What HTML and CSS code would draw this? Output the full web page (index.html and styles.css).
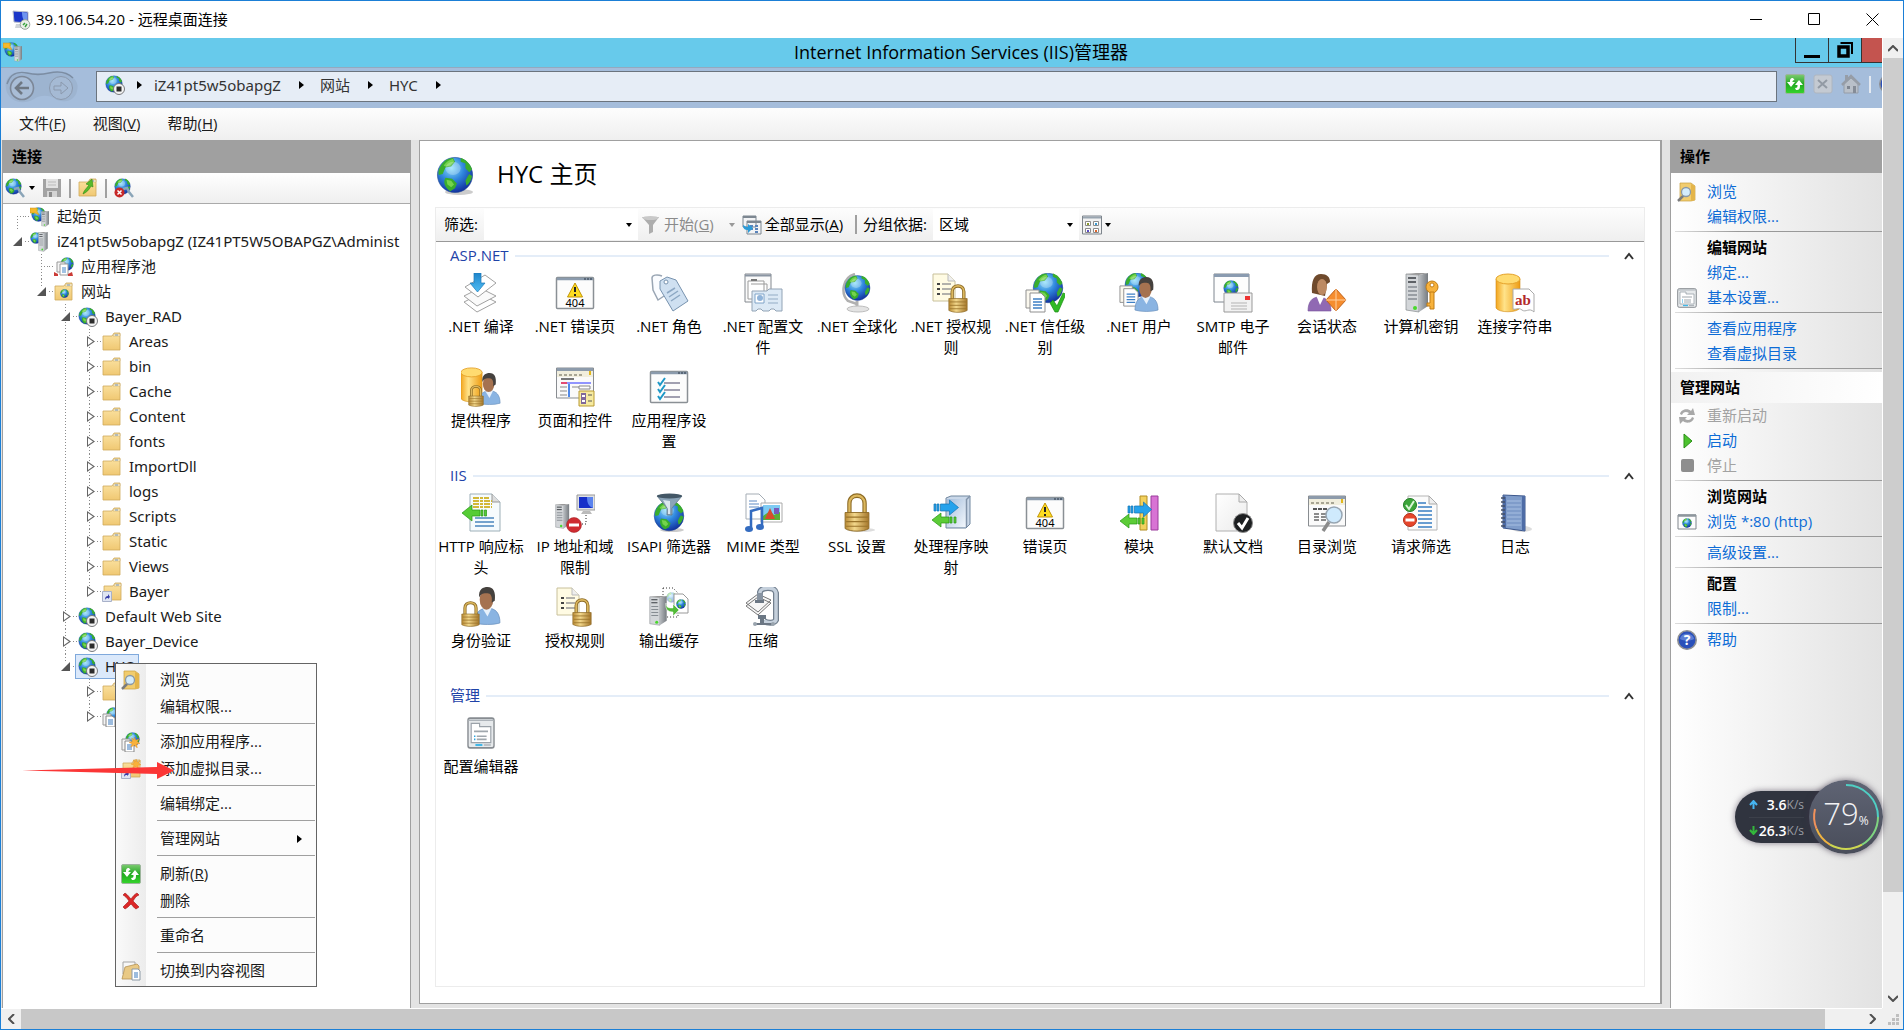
FILE: index.html
```html
<!DOCTYPE html>
<html lang="zh-CN">
  <head>
    <meta charset="UTF-8" />
    <title>39.106.54.20 - 远程桌面连接</title>
    <link rel="stylesheet" href="styles.css">
  </head>
  <body>
    <div class="window">
      <header class="titlebar">
        <svg class="icon" viewBox="0 0 20 20"><use href="#i-rdp" /></svg>
        <span class="titlebar-text">39.106.54.20 - 远程桌面连接</span>
        <button class="win-button" aria-label="最小化"><svg width="13" height="13"><path d="M0 6.500h12" stroke="#000" /></svg></button>
        <button class="win-button" aria-label="最大化"><svg width="13" height="13"><path d="M.5 .5h11v11h-11z" fill="none" stroke="#000" /></svg></button>
        <button class="win-button" aria-label="关闭"><svg width="13" height="13"><path d="M.5 .5l12 12M12.500 .5l-12 12" stroke="#000" /></svg></button>
      </header>

      <div class="viewport">
        <div class="remote">
          <!-- IIS 标题栏 -->
          <div class="iis-title">
            <svg class="icon" viewBox="0 0 20 20"><use href="#i-iis" /></svg>
            <h1 class="iis-name">Internet Information Services (IIS)管理器</h1>
            <button class="iis-button" aria-label="最小化"><svg width="16" height="16"><path d="M0 13h16v3H0z" /></svg></button>
            <button class="iis-button" aria-label="还原"><svg width="16" height="16"><path d="M2 5h9v9H2z" fill="none" stroke="#000" stroke-width="3.500" /><path d="M3.500 1h11.500v11" fill="none" stroke="#000" stroke-width="2" /></svg></button>
            <button class="iis-button close" aria-label="关闭"></button>
          </div>

          <!-- 地址栏 -->
          <div class="navbar">
            <svg class="nav-arrows" viewBox="0 0 80 36">
              <path d="M3 19C1 8 8 1 20 2c10 1 13 3 20 2 9-1 17-3 25 1 8 3 11 9 9 16-2 11-16 13-23 7-6-3-14-3-20 1C19 36 5 31 3 19z" fill="#9db4d0" />
              <path d="M4 14C7 4 15 1 24 3c8 2 14 2 22 0 9-2 18-1 24 5" fill="none" stroke="#7c8da3" stroke-width="1.500" />
              <circle cx="19" cy="18" r="11.500" fill="#a9bdd6" stroke="#7c8797" stroke-width="1.600" />
              <circle cx="58" cy="18" r="11.500" fill="#a5bad4" stroke="#8b99ad" />
              <path d="M13 18h13M19 12l-6 6 6 6" fill="none" stroke="#6f7883" stroke-width="2.600" />
              <path d="M51 16h7v-4l7 6-7 6v-4h-7z" fill="none" stroke="#8b99ad" />
            </svg>
            <nav class="address" aria-label="路径">
              <svg class="icon" viewBox="0 0 20 20"><use href="#i-site" /></svg>
              <span class="crumb-arrow"></span><a href="#">iZ41pt5w5obapgZ</a>
              <span class="crumb-arrow"></span><a href="#">网站</a>
              <span class="crumb-arrow"></span><a href="#">HYC</a>
              <span class="crumb-arrow"></span>
            </nav>
            <div class="nav-tools">
              <button aria-label="刷新"><svg class="icon" viewBox="0 0 20 20"><use href="#i-refresh" /></svg></button>
              <button aria-label="停止"><svg class="icon" viewBox="0 0 20 20"><rect x="1" y="1" width="18" height="18" rx="2" fill="#c4cad2" stroke="#aeb6c0" /><path d="M5 6l9 8M14 6l-9 8" stroke="#929aa4" stroke-width="2" /></svg></button>
              <button aria-label="主页"><svg class="icon" viewBox="0 0 20 20"><path d="M3 10v9h14v-9L10 4z" fill="#b9c0c9" stroke="#959da8" /><path d="M1 11l9-9 9 9" fill="none" stroke="#969da7" stroke-width="2.500" /><path d="M4 1h3v4L4 8z" fill="#969da7" /><path d="M12 12h3v7h-3z" fill="#858c97" /><path d="M6 12h3v3H6z" fill="#7f8691" /></svg></button>
              <span class="nav-sep"></span>
              <button aria-label="帮助"><svg class="icon" viewBox="0 0 20 20"><use href="#i-help" /></svg></button>
            </div>
          </div>

          <div class="menubar">
            <button>文件(<u>F</u>)</button>
            <button>视图(<u>V</u>)</button>
            <button>帮助(<u>H</u>)</button>
          </div>

          <div class="panes">
            <!-- 连接 -->
            <aside class="connections">
              <h2 class="pane-title">连接</h2>
              <div class="conn-tools">
                <button aria-label="连接"><svg class="icon" viewBox="0 0 20 20"><use href="#i-connect" /></svg><span class="caret"></span></button>
                <button aria-label="保存"><svg class="icon" viewBox="0 0 20 20"><path d="M1 1h18v18H1z" fill="#a3a3a3" /><path d="M4 1h12v9H4z" fill="#e3e3e3" /><path d="M6 4h8M6 7h8" stroke="#bbb" /><path d="M5 13h10v6H5z" fill="#d4d4d4" /><path d="M7 14h3v5H7z" fill="#8c8c8c" /></svg></button>
                <span class="tool-sep"></span>
                <button aria-label="上移"><svg class="icon" viewBox="0 0 20 20"><use href="#i-folder" /><path d="M5 16c1-4 4-6 6-9L8 6l6-5 1 8-2-1c-2 4-4 6-8 8z" fill="#57bb2c" stroke="#2f8a12" stroke-width=".6" /></svg></button>
                <span class="tool-sep"></span>
                <button aria-label="断开连接"><svg class="icon" viewBox="0 0 20 20"><use href="#i-connect" /><circle cx="5.500" cy="14.500" r="5" fill="#c72828" /><path d="M3.500 12.500l4 4M7.500 12.500l-4 4" stroke="#fff" stroke-width="1.500" /></svg></button>
              </div>
              <ul class="tree">
                <li><div class="node leaf"><span class="expander"></span><svg class="icon" viewBox="0 0 20 20"><use href="#i-iis" /></svg><span>起始页</span></div></li>
                <li>
                  <div class="node"><span class="expander open"></span><svg class="icon" viewBox="0 0 20 20"><use href="#i-server" /></svg><span>iZ41pt5w5obapgZ (IZ41PT5W5OBAPGZ\Administ</span></div>
                  <ul>
                    <li><div class="node leaf"><span class="expander"></span><svg class="icon" viewBox="0 0 20 20"><use href="#i-pool" /></svg><span>应用程序池</span></div></li>
                    <li>
                      <div class="node"><span class="expander open"></span><svg class="icon" viewBox="0 0 20 20"><use href="#i-folder" /><use href="#globe" x="6" y="7" width="9" height="9" /></svg><span>网站</span></div>
                      <ul>
                        <li>
                          <div class="node"><span class="expander open"></span><svg class="icon" viewBox="0 0 20 20"><use href="#i-site" /></svg><span>Bayer_RAD</span></div>
                          <ul>
                            <li><div class="node"><span class="expander"></span><svg class="icon" viewBox="0 0 20 20"><use href="#i-folder" /></svg><span>Areas</span></div></li>
                            <li><div class="node"><span class="expander"></span><svg class="icon" viewBox="0 0 20 20"><use href="#i-folder" /></svg><span>bin</span></div></li>
                            <li><div class="node"><span class="expander"></span><svg class="icon" viewBox="0 0 20 20"><use href="#i-folder" /></svg><span>Cache</span></div></li>
                            <li><div class="node"><span class="expander"></span><svg class="icon" viewBox="0 0 20 20"><use href="#i-folder" /></svg><span>Content</span></div></li>
                            <li><div class="node"><span class="expander"></span><svg class="icon" viewBox="0 0 20 20"><use href="#i-folder" /></svg><span>fonts</span></div></li>
                            <li><div class="node"><span class="expander"></span><svg class="icon" viewBox="0 0 20 20"><use href="#i-folder" /></svg><span>ImportDll</span></div></li>
                            <li><div class="node"><span class="expander"></span><svg class="icon" viewBox="0 0 20 20"><use href="#i-folder" /></svg><span>logs</span></div></li>
                            <li><div class="node"><span class="expander"></span><svg class="icon" viewBox="0 0 20 20"><use href="#i-folder" /></svg><span>Scripts</span></div></li>
                            <li><div class="node"><span class="expander"></span><svg class="icon" viewBox="0 0 20 20"><use href="#i-folder" /></svg><span>Static</span></div></li>
                            <li><div class="node"><span class="expander"></span><svg class="icon" viewBox="0 0 20 20"><use href="#i-folder" /></svg><span>Views</span></div></li>
                            <li><div class="node"><span class="expander"></span><svg class="icon" viewBox="0 0 20 20"><use href="#i-vdir" /></svg><span>Bayer</span></div></li>
                          </ul>
                        </li>
                        <li><div class="node"><span class="expander"></span><svg class="icon" viewBox="0 0 20 20"><use href="#i-site" /></svg><span>Default Web Site</span></div></li>
                        <li><div class="node"><span class="expander"></span><svg class="icon" viewBox="0 0 20 20"><use href="#i-site" /></svg><span>Bayer_Device</span></div></li>
                        <li>
                          <div class="node"><span class="expander open"></span><span class="selected"><svg class="icon" viewBox="0 0 20 20"><use href="#i-site" /></svg><span>HYC</span></span></div>
                          <ul>
                            <li><div class="node"><span class="expander"></span><svg class="icon" viewBox="0 0 20 20"><use href="#i-folder" /></svg></div></li>
                            <li><div class="node"><span class="expander"></span><svg class="icon" viewBox="0 0 20 20"><use href="#i-app" /></svg></div></li>
                          </ul>
                        </li>
                      </ul>
                    </li>
                  </ul>
                </li>
              </ul>
            </aside>

            <!-- 功能视图 -->
            <main class="features">
              <div class="page-head">
                <svg class="page-globe" viewBox="0 0 40 40"><ellipse cx="24" cy="36" rx="14" ry="3" fill="#ccc" /><use href="#globe" width="40" height="38" /></svg>
                <h2>HYC 主页</h2>
              </div>
              <div class="feature-box">
                <div class="filter-bar">
                  <label for="filter">筛选:</label>
                  <div class="combo"><input id="filter" type="text"><span class="caret"></span></div>
                  <button class="disabled"><svg class="icon" viewBox="0 0 20 20"><path d="M1 2h17l-6 8v7l-4 2v-9z" fill="#adadad" /><ellipse cx="9.500" cy="3" rx="8" ry="2" fill="#c9c9c9" /></svg>开始(<u>G</u>)</button>
                  <span class="caret gray"></span>
                  <button><svg class="icon" viewBox="0 0 20 20"><path d="M1 1h13v11H1zM5 6h14v13H5z" fill="#f3f4f6" stroke="#7d8791" /><path d="M1 2h13M5 7h14" stroke="#7d8791" stroke-width="2" /><path d="M8 11h3M13 11h3M8 14h3M13 14h3M13 17h3" stroke="#5a84bb" stroke-width="2" /><path d="M1 10c0 4 2 5 5 5v3l5-5-5-4v3c-2 0-3-1-5-2z" fill="#2b9bd8" /></svg>全部显示(<u>A</u>)</button>
                  <span class="tool-sep"></span>
                  <label for="group">分组依据:</label>
                  <div class="combo group"><select id="group"><option>区域</option></select><span class="caret"></span></div>
                  <button aria-label="视图"><svg class="icon" viewBox="0 0 20 20"><path d="M.5 1h19v18H.5z" fill="#f2f2f2" stroke="#7e858c" /><path d="M1 2.500h18" stroke="#99a5b0" stroke-width="2" /><path d="M3.500 6.500h5v4h-5zM11.500 6.500h5v4h-5zM3.500 13.500h5v4h-5zM11.500 13.500h5v4h-5z" fill="#fff" stroke="#8a8a8a" /><path d="M5 8h2v2H5z" fill="#8a9a2c" /><path d="M13 8h2v2h-2z" fill="#3c9bd2" /><path d="M5 15h2v2H5z" fill="#594bc4" /><path d="M13 15h2v2h-2z" fill="#e0662a" /></svg><span class="caret"></span></button>
                </div>

                <section>
                  <div class="group-head"><h3>ASP.NET</h3><span class="rule"></span><svg class="chevron" viewBox="0 0 10 8"><use href="#i-up" /></svg></div>
                  <div class="items">
                    <a href="#" class="item"><svg viewBox="0 0 40 40">
                      <path d="M3 29l16-8 16 8-19 10z" fill="#fff" stroke="#a1a1a1" /><path d="M3 23l16-8 16 8-19 10z" fill="#fafafa" stroke="#a1a1a1" /><path d="M4 14L24 2l11 8-18 14z" fill="#fff" stroke="#a1a1a1" />
                      <path d="M13 0h7v10h4l-7.500 9L9 10h4z" fill="url(#blueG)" stroke="#1c7ab8" stroke-width=".7" /></svg><span>.NET 编译</span></a>
                    <a href="#" class="item"><svg viewBox="0 0 40 40"><use href="#warning" /><text x="20" y="34" text-anchor="middle" class="code">404</text></svg><span>.NET 错误页</span></a>
                    <a href="#" class="item"><svg viewBox="0 0 40 40">
                      <path d="M13 3C8 1 3 2 3 5l1 12 5 10 6-4" fill="#fafcff" stroke="#9aa6b4" stroke-width="1.500" />
                      <path d="M11 8l7-4 9 3 12 21-15 10-13-22z" fill="#cfe0f1" stroke="#7792ae" /><circle cx="17" cy="9" r="2" fill="#fff" stroke="#7792ae" /><path d="M18 20l8-5M20 24l9-6M22 28l9-6" stroke="#8ca7c3" stroke-width="1.500" /></svg><span>.NET 角色</span></a>
                    <a href="#" class="item"><svg viewBox="0 0 40 40">
                      <path d="M2 1h26v28H2z" fill="#fafafa" stroke="#84898f" /><path d="M2 2.500h26" stroke="#8a95a2" stroke-width="2" /><path d="M5 8h16v18H5zM8 11h16v12" fill="#fff" stroke="#9b9b9b" /><path d="M8 7h6" stroke="#777" stroke-width="2" />
                      <path d="M9 18h15l2-2h13v22h-6l-2-2h-3l-2 2h-6l-2-2h-3l-2 2H9z" fill="#dce9f5" stroke="#92a3b5" /><path d="M12 21h9v9h-9z" fill="#fff" stroke="#7fa3c8" /><circle cx="17" cy="25" r="3" fill="#8fb3d9" /><path d="M25 22h10M25 26h10M25 30h10" stroke="#93acc5" /></svg><span>.NET 配置文<br>件</span></a>
                    <a href="#" class="item"><svg viewBox="0 0 40 40">
                      <path d="M18 1C6 4 3 20 11 28l9 3" fill="none" stroke="#b0b0b0" stroke-width="2.500" /><path d="M20 28v7" stroke="#b0b0b0" stroke-width="3" /><ellipse cx="21" cy="36" rx="11" ry="3" fill="#e3e3e3" stroke="#bdbdbd" /><use href="#globe" x="7" y="1" width="27" height="28" /></svg><span>.NET 全球化</span></a>
                    <a href="#" class="item"><svg viewBox="0 0 40 40"><use href="#frules" /></svg><span>.NET 授权规<br>则</span></a>
                    <a href="#" class="item"><svg viewBox="0 0 40 40">
                      <use href="#globe" x="7" y="-1" width="32" height="32" /><use href="#docs" x="0" y="16" width="21" height="24" /><path d="M25 30l3-3 4 6 6-13 3 1-8 18h-3z" fill="#31bb25" stroke="#1b8b12" stroke-width=".7" /></svg><span>.NET 信任级<br>别</span></a>
                    <a href="#" class="item"><svg viewBox="0 0 40 40">
                      <use href="#globe" x="5" y="-1" width="26" height="26" /><use href="#docs" x="0" y="12" width="20" height="22" /><use href="#person" x="15" y="4" width="25" height="35" /></svg><span>.NET 用户</span></a>
                    <a href="#" class="item"><svg viewBox="0 0 40 40">
                      <path d="M1 1h35v28H1z" fill="#fdfdfd" stroke="#7e868f" /><path d="M1 2.500h35" stroke="#8a9bb0" stroke-width="3" /><use href="#globe" x="10" y="7" width="16" height="16" /><path d="M11 20h28v19H11z" fill="#f2f2f2" stroke="#999" /><path d="M32 23h5v4h-5z" fill="#e33" /><path d="M18 30h16M18 33h16M18 36h16" stroke="#b3b3b3" /></svg><span>SMTP 电子<br>邮件</span></a>
                    <a href="#" class="item"><svg viewBox="0 0 40 40">
                      <path d="M1 38c0-9 4-14 11-14s12 5 12 14z" fill="#9069b3" stroke="#76539a" stroke-width=".6" /><path d="M9 22l4 10 5-10z" fill="#fff" /><path d="M5 20C4 8 7 1 14 1c6 0 9 3 9 8l-3 2-2 12z" fill="#6f4a2c" /><ellipse cx="15" cy="14" rx="5" ry="8" fill="#bd8a62" />
                      <path d="M29 16l10 11-10 11-10-11z" fill="#f68d2e" stroke="#c1621a" /><path d="M29 16v22M19 27h20" stroke="#ffd0a0" /></svg><span>会话状态</span></a>
                    <a href="#" class="item"><svg viewBox="0 0 40 40">
                      <use href="#tower" x="4" y="0" width="26" height="40" /><circle cx="31" cy="14" r="6" fill="#f7b23c" stroke="#c17d14" /><circle cx="31" cy="12" r="2" fill="#fff" stroke="#c17d14" /><path d="M29 19h4v17h-4v-3h-3v-3h3z" fill="#f7b23c" stroke="#c17d14" /></svg><span>计算机密钥</span></a>
                    <a href="#" class="item"><svg viewBox="0 0 40 40">
                      <use href="#database" x="0" y="0" width="26" height="40" /><path d="M18 16h16l5 5v18c-5-5-8 1-12-2s-6 0-9-1z" fill="#fff" stroke="#aaa" /><text x="20" y="32" class="ab">ab</text></svg><span>连接字符串</span></a>
                    <a href="#" class="item"><svg viewBox="0 0 40 40">
                      <use href="#database" x="-1" y="0" width="23" height="36" /><use href="#person" x="17" y="6" width="23" height="32" /><use href="#lock" x="7" y="18" width="16" height="22" /></svg><span>提供程序</span></a>
                    <a href="#" class="item"><svg viewBox="0 0 40 40">
                      <use href="#browser" /><path d="M6 12h13" stroke="#777" stroke-width="2" /><path d="M6 16h30" stroke="#6d72ff" stroke-width="1.500" /><path d="M6 16h6" stroke="#f34" stroke-width="1.500" /><path d="M14 17v13" stroke="#4f88e8" stroke-width="2" /><path d="M5 20h7M5 24h7M5 28h7M17 20h8" stroke="#888" /><path d="M24 19h11v3H24z" fill="#fff" stroke="#888" />
                      <path d="M24 24h15v15H24z" fill="#f6eaa0" stroke="#b99a32" /><path d="M26 26h5v11h-5z" fill="#80689a" /><path d="M27 28h3v2h-3zM27 33h3v2h-3z" fill="#fff" /><path d="M33 28h4M33 34h4" stroke="#555" /></svg><span>页面和控件</span></a>
                    <a href="#" class="item"><svg viewBox="0 0 40 40">
                      <use href="#frame" /><path d="M15 16h16M15 23h16M15 30h16" stroke="#838198" stroke-width="1.500" /><path d="M9 15l2 3 5-7M9 22l2 3 5-7M9 29l2 3 5-7" fill="none" stroke="#1d98c8" stroke-width="2" /></svg><span>应用程序设<br>置</span></a>
                  </div>
                </section>

                <section>
                  <div class="group-head"><h3>IIS</h3><span class="rule"></span><svg class="chevron" viewBox="0 0 10 8"><use href="#i-up" /></svg></div>
                  <div class="items">
                    <a href="#" class="item"><svg viewBox="0 0 40 40">
                      <path d="M9 1h22l8 8v29H9z" fill="#f6fbfd" stroke="#9dafb8" /><path d="M31 1v8h8" fill="#ddd" stroke="#999" /><path d="M12 5h16M12 8h19M12 11h19M12 14h19" stroke="#d3b838" stroke-width="2" stroke-dasharray="6 1 3 1" /><path d="M14 25h19M14 29h19M14 33h19" stroke="#4b86bd" stroke-width="1.500" />
                      <path d="M1 20l10-8v5h8v6h-8v5zM20 17h2v6h-2zM23.500 17h2v6h-2z" fill="#56cc35" stroke="#279516" stroke-width=".7" /></svg><span>HTTP 响应标<br>头</span></a>
                    <a href="#" class="item"><svg viewBox="0 0 40 40">
                      <use href="#tower" x="0" y="11" width="16" height="25" /><path d="M22 2h18v15H22z" fill="#dfe1e4" stroke="#999" /><path d="M24 4h14v11H24z" fill="#162fc9" /><path d="M32 4h6v11c-5-2-6-6-6-11z" fill="#5a83ee" /><path d="M28 18h7l2 3H26z" fill="#bbb" /><path d="M31 22v9h-7" fill="none" stroke="#222" stroke-dasharray="1 2" /><circle cx="19" cy="32" r="7.500" fill="#cf2c31" stroke="#9d1f22" stroke-width=".5" /><path d="M14 30.500h10v3H14z" fill="#fff" /></svg><span>IP 地址和域<br>限制</span></a>
                    <a href="#" class="item"><svg viewBox="0 0 40 40">
                      <ellipse cx="23" cy="37" rx="12" ry="2" fill="#ccc" /><use href="#globe" x="4" y="7" width="32" height="32" /><path d="M8 3l10 12v7h5v-7L33 3z" fill="#8ba4b8" stroke="#5d7283" stroke-width=".7" /><path d="M14 7l5 9v5l2 0V8z" fill="#dbe6ee" /><ellipse cx="20.500" cy="3" rx="12.500" ry="2.500" fill="#435766" /></svg><span>ISAPI 筛选器</span></a>
                    <a href="#" class="item"><svg viewBox="0 0 40 40">
                      <path d="M3 1h13l6 6v19H3z" fill="#fff" stroke="#a5adb5" /><path d="M6 8h8M6 11h10M6 14h10" stroke="#5e8bc4" /><path d="M18 10h21v19H18z" fill="#fff" stroke="#aaa" /><path d="M20 12h17v15H20z" fill="#7ecbf3" /><path d="M20 23l7-5 4 4 6-3v8H20z" fill="#5cae35" /><path d="M22 26l5-11 5 11z" fill="#d94c2c" /><path d="M31 15h5v6h-5z" fill="#7959b8" />
                      <path d="M8 34V18l11-3v19" fill="none" stroke="#346cc0" stroke-width="2.500" /><ellipse cx="6" cy="36" rx="4" ry="3" fill="#346cc0" /><ellipse cx="17" cy="34" rx="4" ry="3" fill="#346cc0" /></svg><span>MIME 类型</span></a>
                    <a href="#" class="item"><svg viewBox="0 0 40 40"><ellipse cx="24" cy="37" rx="14" ry="2" fill="#ddd" /><use href="#lock" x="7" y="0" width="26" height="39" /></svg><span>SSL 设置</span></a>
                    <a href="#" class="item"><svg viewBox="0 0 40 40">
                      <path d="M15 5l5-2h19v28l-4 4H15z" fill="#cad8e9" stroke="#71879f" /><path d="M16 6h19v28H16z" fill="url(#panelG)" /><path d="M35.500 7v27M35 7l4-4" stroke="#8294aa" stroke-width="1.500" /><path d="M3 11h2v7H3zM6 11h2v7H6zM9.500 11h9V7l9 7.500-9 7.500v-4h-9z" fill="#25a2ec" stroke="#1174b3" stroke-width=".7" /><path d="M1 27l9-7v4h8v6h-8v4zM19 24h2v6h-2zM23 24h2v6h-2z" fill="#5ccc37" stroke="#279516" stroke-width=".7" /></svg><span>处理程序映<br>射</span></a>
                    <a href="#" class="item"><svg viewBox="0 0 40 40"><use href="#warning" /><text x="20" y="34" text-anchor="middle" class="code">404</text></svg><span>错误页</span></a>
                    <a href="#" class="item"><svg viewBox="0 0 40 40">
                      <path d="M21 3h7v34h-7z" fill="#f2d15e" stroke="#b28d23" /><path d="M32 3h7v34h-7z" fill="#d873d4" stroke="#9a3d9b" /><path d="M9 13h2v7H9zM12 13h2v7h-2zM15.500 13h9V9l8 7.500-8 7.500v-4h-9z" fill="#25a2ec" stroke="#1174b3" stroke-width=".7" /><path d="M1 28l9-7v4h8v6h-8v4zM19 25h2v6h-2zM23 25h2v6h-2z" fill="#5ccc37" stroke="#279516" stroke-width=".7" /></svg><span>模块</span></a>
                    <a href="#" class="item"><svg viewBox="0 0 40 40">
                      <path d="M3 1h23l8 8v29H3z" fill="url(#pageG)" stroke="#b0b0b0" /><path d="M26 1v8h8z" fill="#eee" stroke="#aaa" /><circle cx="30" cy="30" r="9.500" fill="#1d1f21" stroke="#8c8c8c" /><path d="M25 30l4 5 6-10" fill="none" stroke="#fff" stroke-width="3" /></svg><span>默认文档</span></a>
                    <a href="#" class="item"><svg viewBox="0 0 40 40">
                      <use href="#browser" y="2" /><path d="M6 16h14" stroke="#555" stroke-width="2" stroke-dasharray="4 1" /><path d="M7 21h5M14 21h5M7 24h5M14 24h5M7 27h5M14 27h5" stroke="#666" stroke-width="1.500" /><path d="M22 29l-6 9" stroke="#8b8b8b" stroke-width="3.500" /><circle cx="27" cy="22" r="8" fill="#cfeafd" stroke="#97a5b1" stroke-width="1.500" /></svg><span>目录浏览</span></a>
                    <a href="#" class="item"><svg viewBox="0 0 40 40">
                      <path d="M7 3h21l8 8v26H7z" fill="#fbfbfb" stroke="#b5b5b5" /><path d="M28 3v8h8z" fill="#eee" stroke="#aaa" /><path d="M17 10h8M17 14h14M17 18h14M17 22h14M17 26h14M17 30h14M17 34h14" stroke="#387fc4" stroke-width="1.500" /><circle cx="9" cy="12" r="6.500" fill="#3ca53a" stroke="#237d25" /><path d="M5 12l3 4 5-8" fill="none" stroke="#d9f6d6" stroke-width="2" /><circle cx="9" cy="27" r="6.500" fill="#e6462b" stroke="#b12f1a" /><path d="M4.500 25.500h9v3h-9z" fill="#fff" /></svg><span>请求筛选</span></a>
                    <a href="#" class="item"><svg viewBox="0 0 40 40">
                      <ellipse cx="27" cy="36" rx="10" ry="3" fill="#ddd" /><path d="M8 2l22 1v35l-22-3z" fill="#7f9cca" stroke="#3c578c" /><path d="M8 2l3 2v31l-3 0zM27 3h3v34l-3 1z" fill="#4e6ca6" /><path d="M12 8h14M12 12h14M12 16h14M12 20h14M12 24h14M12 28h14M12 32h14" stroke="#a8bfe2" /><path d="M6 5h4M6 9h4M6 13h4M6 17h4M6 21h4M6 25h4M6 29h4M6 33h4" stroke="#444f66" stroke-width="1.500" /></svg><span>日志</span></a>
                    <a href="#" class="item"><svg viewBox="0 0 40 40"><use href="#person" x="13" y="0" width="27" height="38" /><use href="#lock" x="0" y="14" width="19" height="26" /></svg><span>身份验证</span></a>
                    <a href="#" class="item"><svg viewBox="0 0 40 40"><use href="#frules" /></svg><span>授权规则</span></a>
                    <a href="#" class="item"><svg viewBox="0 0 40 40">
                      <path d="M14 1h10l5 5v24H14z" fill="#fff" stroke="#333" stroke-dasharray="1 2" /><use href="#globe" x="17" y="5" width="11" height="11" opacity=".4" /><use href="#tower" x="0" y="9" width="20" height="30" /><path d="M25 7h9l5 5v14H25z" fill="#fff" stroke="#999" /><use href="#globe" x="27" y="12" width="10" height="10" /><path d="M17 16c0 5 3 5 7 5v-4l6 6-6 6v-4c-6 0-8-4-7-9z" fill="#53bb38" stroke="#fff" stroke-width=".5" /></svg><span>输出缓存</span></a>
                    <a href="#" class="item"><svg viewBox="0 0 40 40">
                      <path d="M17 17V5c1-5 15-6 16 1v27c-2 4-9 3-12 1" fill="none" stroke="#73808f" stroke-width="6" /><path d="M17 17V5c1-5 15-6 16 1v27c-2 4-9 3-12 1" fill="none" stroke="#c5d0dc" stroke-width="3.500" /><path d="M3 19l12-9 13 6-13 12zM3 16l12-9 13 6-13 12z" fill="#f6f6f6" stroke="#777" /><path d="M14 6h6v9h-6z" fill="#8793a1" /><path d="M12 13h9v3h-9zM15 28h8v4h-8zM17 32h4v5h-4z" fill="#6b7784" /><path d="M12 37h17" stroke="#6c7784" stroke-width="2" /><circle cx="12" cy="37" r="2" fill="#9aa4ae" /><circle cx="30" cy="37" r="2" fill="#9aa4ae" /></svg><span>压缩</span></a>
                  </div>
                </section>

                <section>
                  <div class="group-head"><h3>管理</h3><span class="rule"></span><svg class="chevron" viewBox="0 0 10 8"><use href="#i-up" /></svg></div>
                  <div class="items">
                    <a href="#" class="item"><svg viewBox="0 0 40 40"><use href="#i-config" x="6" y="4" width="28" height="32" /></svg><span>配置编辑器</span></a>
                  </div>
                </section>
              </div>
            </main>

            <!-- 操作 -->
            <aside class="actions">
              <h2 class="pane-title">操作</h2>
              <ul class="action-list">
                <li><svg class="icon" viewBox="0 0 20 20"><use href="#i-browse" /></svg><a href="#">浏览</a></li>
                <li><a href="#">编辑权限...</a></li>
                <li class="sep"></li>
                <li><h3>编辑网站</h3></li>
                <li><a href="#">绑定...</a></li>
                <li><svg class="icon" viewBox="0 0 20 20"><use href="#i-config" /></svg><a href="#">基本设置...</a></li>
                <li class="sep"></li>
                <li><a href="#">查看应用程序</a></li>
                <li><a href="#">查看虚拟目录</a></li>
                <li class="sep"></li>
                <li class="band"><h3>管理网站</h3></li>
                <li><svg class="icon" viewBox="0 0 20 20"><path d="M3 8c1-5 8-6 11-3l2-3 2 7-8 0 2-2c-3-2-6-1-7 2zM17 12c-1 5-8 6-11 3l-3 3-1-7h8l-2 2c3 2 6 1 7-2z" fill="#a8a8a8" /></svg><span class="off">重新启动</span></li>
                <li><svg class="icon" viewBox="0 0 20 20"><path d="M7 3l8 7-8 7z" fill="#4cc22e" stroke="#2a8f16" /></svg><a href="#">启动</a></li>
                <li><svg class="icon" viewBox="0 0 20 20"><rect x="4" y="3" width="13" height="13" rx="2" fill="#8e8e8e" /></svg><span class="off">停止</span></li>
                <li class="sep"></li>
                <li><h3>浏览网站</h3></li>
                <li><svg class="icon" viewBox="0 0 20 20"><path d="M1 3h18v14H1z" fill="#fcfcfc" stroke="#80868c" /><path d="M1 3.500h18" stroke="#8e969d" stroke-width="2.500" /><use href="#globe" x="5" y="6" width="10" height="10" /></svg><a href="#">浏览 *:80 (http)</a></li>
                <li class="sep"></li>
                <li><a href="#">高级设置...</a></li>
                <li class="sep"></li>
                <li><h3>配置</h3></li>
                <li><a href="#">限制...</a></li>
                <li class="sep"></li>
                <li><svg class="icon" viewBox="0 0 20 20"><use href="#i-help" /><text x="10" y="15" text-anchor="middle" class="q">?</text></svg><a href="#">帮助</a></li>
              </ul>
            </aside>
          </div>
        </div>

        <div class="scroll-y">
          <button aria-label="向上滚动"><svg width="10" height="7"><path d="M0 6l5-5 5 5" fill="none" stroke="#505050" stroke-width="2" /></svg></button>
          <div class="thumb"></div>
          <div class="track"></div>
          <button aria-label="向下滚动"><svg width="10" height="7"><path d="M0 1l5 5 5-5" fill="none" stroke="#505050" stroke-width="2" /></svg></button>
        </div>
        <div class="scroll-x">
          <button aria-label="向左滚动"><svg width="7" height="10"><path d="M6 0L1 5l5 5" fill="none" stroke="#505050" stroke-width="2" /></svg></button>
          <div class="thumb"></div>
          <div class="track"></div>
          <button aria-label="向右滚动"><svg width="7" height="10"><path d="M1 0l5 5-5 5" fill="none" stroke="#505050" stroke-width="2" /></svg></button>
        </div>
        <svg class="grip" viewBox="0 0 20 20"><path d="M14 6h3v3h-3zM10 10h3v3h-3zM14 10h3v3h-3zM6 14h3v3H6zM10 14h3v3h-3zM14 14h3v3h-3z" fill="#bfbfbf" /></svg>
      </div>

      <!-- 右键菜单 -->
      <div class="context-menu" role="menu">
        <button role="menuitem"><svg class="icon" viewBox="0 0 20 20"><use href="#i-browse" /></svg><span>浏览</span></button>
        <button role="menuitem"><span>编辑权限...</span></button>
        <hr>
        <button role="menuitem"><svg class="icon" viewBox="0 0 20 20"><use href="#i-app" /><use href="#star" x="8" y="5" width="11" height="11" /></svg><span>添加应用程序...</span></button>
        <button role="menuitem"><svg class="icon" viewBox="0 0 20 20"><use href="#i-vdir" /><use href="#star" x="10" y="0" width="10" height="10" /></svg><span>添加虚拟目录...</span></button>
        <hr>
        <button role="menuitem"><span>编辑绑定...</span></button>
        <hr>
        <button role="menuitem"><span>管理网站</span><i class="crumb-arrow"></i></button>
        <hr>
        <button role="menuitem"><svg class="icon" viewBox="0 0 20 20"><use href="#i-refresh" /></svg><span>刷新(<u>R</u>)</span></button>
        <button role="menuitem"><svg class="icon" viewBox="0 0 20 20"><path d="M4 2c3 2 4 4 6 6 2-3 4-5 6-6l2 2c-3 1-4 3-6 6 2 2 4 4 6 6l-3 2c-2-1-3-3-5-5-2 2-4 4-6 5l-2-2c2-2 4-4 6-6-2-3-4-5-6-6z" fill="#dc2727" stroke="#a31818" stroke-width=".6" /></svg><span>删除</span></button>
        <hr>
        <button role="menuitem"><span>重命名</span></button>
        <hr>
        <button role="menuitem"><svg class="icon" viewBox="0 0 20 20"><path d="M2 1h12v12H2z" fill="#f7f7f7" stroke="#a5a5a5" /><path d="M1 18L4 6l12-3 2 2v13z" fill="#e9c985" stroke="#b59355" stroke-width=".8" /><path d="M11 8h6l2 2v9h-8z" fill="#fff" stroke="#8c99a5" /><path d="M13 12h4M13 14h4M13 16h4" stroke="#3978bd" /></svg><span>切换到内容视图</span></button>
      </div>

      <svg class="pointer" viewBox="0 0 152 18"><path d="M0 8.500L135 5V0l17 8.500L135 17v-5z" fill="#fb3636" /></svg>

      <!-- 网速悬浮球 -->
      <div class="meter">
        <div class="speeds">
          <p><svg width="9" height="9"><path d="M4.500 9V2M1 5l3.500-4L8 5" fill="none" stroke="#46b4f0" stroke-width="2" /></svg><b>3.6</b>K/s</p>
          <p><svg width="9" height="9"><path d="M4.500 0v7M1 4l3.500 4L8 4" fill="none" stroke="#33b83c" stroke-width="2" /></svg><b>26.3</b>K/s</p>
        </div>
        <div class="ball">
          <svg class="ring" viewBox="0 0 74 74" fill="none" stroke-width="2">
            <path d="M37 5a32 32 0 0 1 32 32" stroke="#4fcfc4" />
            <path d="M69 37a32 32 0 0 1-16 27.700" stroke="#7fd481" />
            <path d="M53 64.700a32 32 0 0 1-32 0" stroke="#cdd751" />
            <path d="M21 64.700a32 32 0 0 1-13.500-16" stroke="#f0b340" />
            <path d="M7.500 48.700A32 32 0 0 1 6 29" stroke="#f0915b" />
          </svg>
          <span class="percent">79<small>%</small></span>
        </div>
      </div>

      <svg class="sprite" aria-hidden="true">
        <defs>
          <radialGradient id="seaG" cx=".4" cy=".3" r=".7"><stop offset="0" stop-color="#8fe0fb" /><stop offset=".5" stop-color="#2f86dd" /><stop offset="1" stop-color="#1334a0" /></radialGradient>
          <linearGradient id="goldG"><stop offset="0" stop-color="#b98a34" /><stop offset=".4" stop-color="#f3d88c" /><stop offset="1" stop-color="#a5762a" /></linearGradient>
          <linearGradient id="dbG"><stop offset="0" stop-color="#f3a51d" /><stop offset=".35" stop-color="#ffe38a" /><stop offset="1" stop-color="#ee9c12" /></linearGradient>
          <linearGradient id="blueG" x2="0" y2="1"><stop offset="0" stop-color="#1e85cb" /><stop offset="1" stop-color="#50bdf4" /></linearGradient>
          <linearGradient id="folderG" x2="0" y2="1"><stop offset="0" stop-color="#fbe3a3" /><stop offset="1" stop-color="#f0c872" /></linearGradient>
          <linearGradient id="towerG"><stop offset="0" stop-color="#b9bdc1" /><stop offset="1" stop-color="#777c81" /></linearGradient>
          <linearGradient id="panelG" x2="1" y2="1"><stop offset="0" stop-color="#a5bddb" /><stop offset="1" stop-color="#f3f8fd" /></linearGradient>
          <linearGradient id="pageG" x2="1" y2="1"><stop offset="0" stop-color="#fff" /><stop offset="1" stop-color="#ebebeb" /></linearGradient>
          <linearGradient id="greenG" x2="0" y2="1"><stop offset="0" stop-color="#7ecb72" /><stop offset=".5" stop-color="#22a922" /><stop offset="1" stop-color="#35d52b" /></linearGradient>
        </defs>
        <symbol id="globe" viewBox="0 0 40 40">
          <circle cx="20" cy="20" r="18.500" fill="url(#seaG)" stroke="#173f8f" stroke-width=".6" />
          <path d="M4 12C7 6 12 2 18 2l2 4-4 5-6 1-3 7-4 1c-1-3 0-6 1-8zM26 2c5 1 10 6 12 12l-3 3-4-4v-5l-5-2zM10 23l7 1 5 5-2 5-5 3c-5-3-7-8-6-12zM35 19l3 2c-1 5-3 8-6 10l-1-5 2-4z" fill="#39ad2d" />
          <path d="M8 10c3-4 6-6 10-7l1 3-4 4-5 1zM11 25l5 1 3 4-3 3-4-3z" fill="#83dc55" opacity=".8" />
          <ellipse cx="18" cy="13" rx="8" ry="7" fill="#fff" opacity=".25" />
        </symbol>
        <symbol id="lock" viewBox="0 0 24 34" preserveAspectRatio="none">
          <path d="M5 19V9c0-9 14-9 14 0v10" fill="none" stroke="#8c6a25" stroke-width="4" /><path d="M5 19V9c0-9 14-9 14 0v10" fill="none" stroke="#dcb85e" stroke-width="2" />
          <path d="M1 17h22v14c-5 3-17 3-22 0z" fill="url(#goldG)" stroke="#8c6a25" stroke-width=".8" /><path d="M2 21h20M2 25h20M2 29h20" stroke="#9a742b" />
        </symbol>
        <symbol id="person" viewBox="0 0 26 36" preserveAspectRatio="none">
          <path d="M1 34c0-9 4-14 12-14s12 5 12 14c-6 2-18 2-24 0z" fill="#8ab4e2" stroke="#6990bd" stroke-width=".7" /><path d="M8 20l5 8 4-8z" fill="#e8f1fb" />
          <ellipse cx="12" cy="12" rx="6.500" ry="9.500" fill="#a57250" /><path d="M5 10C4 2 9 0 13 0c6 0 8 5 7 13l-3 2c1-6-1-9-4-9-4 0-6 0-8 4z" fill="#45413e" />
        </symbol>
        <symbol id="tower" viewBox="0 0 26 40" preserveAspectRatio="none">
          <path d="M1 1l13 1v37L1 37z" fill="#d3d6d9" stroke="#85898d" stroke-width=".7" /><path d="M14 2l9-2v33l-9 6z" fill="url(#towerG)" /><path d="M1 1l10-1h12l-9 2z" fill="#999" />
          <path d="M3 5h8M3 9h8" stroke="#383d42" stroke-width="1.500" /><path d="M3 14h9M3 18h9M3 22h9M3 26h9" stroke="#868c92" stroke-width="1.500" /><circle cx="10" cy="35" r="2" fill="#48d82c" />
        </symbol>
        <symbol id="database" viewBox="0 0 26 40" preserveAspectRatio="none">
          <path d="M1 6v29c3 5 21 5 24 0V6z" fill="url(#dbG)" stroke="#d18c17" stroke-width=".6" /><ellipse cx="13" cy="6" rx="12" ry="5" fill="#ffdb70" stroke="#e5a22a" />
        </symbol>
        <symbol id="docs" viewBox="0 0 21 24" preserveAspectRatio="none">
          <path d="M1 1h13v18H1z" fill="#fbf8ee" stroke="#8f8f8f" /><path d="M5 4h11l4 4v15H5z" fill="#fff" stroke="#8f8f8f" /><path d="M8 10h9M8 13h9M8 16h9M8 19h9" stroke="#3f80c5" stroke-width="1.300" />
        </symbol>
        <symbol id="frame" viewBox="0 0 40 40">
          <rect x="1.500" y="4.500" width="37" height="31" rx="1" fill="#fcfcfc" stroke="#8a9095" stroke-width="1.500" /><path d="M2 6h36" stroke="#8b9bad" stroke-width="2.500" /><path d="M29 6h2M32 6h2M35 6h2" stroke="#4b5867" stroke-width="1.500" />
        </symbol>
        <symbol id="warning" viewBox="0 0 40 40">
          <use href="#frame" /><path d="M20 10l7.500 14h-15z" fill="#fddd20" stroke="#c29408" /><path d="M20 14v5M20 21v2" stroke="#222" stroke-width="2" />
        </symbol>
        <symbol id="browser" viewBox="0 0 40 40">
          <path d="M1.500 1h37v30h-37z" fill="#fafafa" stroke="#898d91" /><path d="M2 2.500h36" stroke="#8d9bab" stroke-width="3" /><path d="M2 4h36v6H2z" fill="#f1eedd" /><path d="M4 8h3M9 8h3M14 8h3M19 8h3M24 8h3" stroke="#a8a594" stroke-width="2" /><path d="M35 4v4" stroke="#e3b81b" stroke-width="2" />
        </symbol>
        <symbol id="frules" viewBox="0 0 40 40">
          <path d="M2 1h15l7 7v20H2z" fill="#fffbe3" stroke="#c8c09b" /><path d="M17 1v7h7" fill="#eee" stroke="#bbb" /><path d="M6 11h3M6 16h3M6 21h3" stroke="#444" stroke-width="2" /><path d="M11 11h9M11 16h9M11 21h9" stroke="#999" stroke-width="1.500" /><use href="#lock" x="17" y="11" width="20" height="29" />
        </symbol>
        <symbol id="star" viewBox="0 0 12 12"><path d="M6 0l1.500 3.500L11 2 9 5l3 2-3.500.5L9 12 6 9l-4 2 1.500-3.500L0 6l3.500-1L3 1l2.500 2z" fill="#f8b13b" stroke="#e18a1b" stroke-width=".4" /></symbol>
        <symbol id="i-up" viewBox="0 0 10 8"><path d="M1 7l4-5 4 5" fill="none" stroke="#333" stroke-width="2" /></symbol>
        <symbol id="i-rdp" viewBox="0 0 20 20">
          <path d="M2 1l15 1v11L3 12z" fill="#1b36c8" stroke="#b9bfca" /><path d="M11 2l5 1v9c-4-1-5-5-5-10z" fill="#6e94f0" /><path d="M5 14l8 0 2 4H4z" fill="#cfd3d8" /><circle cx="14" cy="14.500" r="4.800" fill="#eaf0e8" stroke="#98a39a" /><path d="M12 15l2-2M14 17l2-3" stroke="#38a13c" stroke-width="1.500" />
        </symbol>
        <symbol id="i-iis" viewBox="0 0 20 20">
          <use href="#globe" x="1" y="0" width="15" height="15" /><path d="M0 1l7 0v3l2 4-4-2H0z" fill="#f5b92d" stroke="#c88e15" stroke-width=".5" /><use href="#tower" x="11" y="4" width="9" height="16" />
        </symbol>
        <symbol id="i-server" viewBox="0 0 20 20"><use href="#globe" x="0" y="0" width="12" height="12" /><use href="#tower" x="8" y="0" width="11" height="20" /></symbol>
        <symbol id="i-site" viewBox="0 0 20 20">
          <use href="#globe" x="0" y="0" width="18" height="18" /><circle cx="14" cy="14" r="5.500" fill="#f4f4f4" stroke="#77797c" /><path d="M11.500 11.500h5v5h-5z" fill="#2c2c2c" />
        </symbol>
        <symbol id="i-pool" viewBox="0 0 20 20">
          <use href="#globe" x="6" y="0" width="14" height="14" /><path d="M3 5h8v10H3z" fill="#f5f5f5" stroke="#999" /><path d="M6 7h8v11H6z" fill="#fff" stroke="#999" /><path d="M8 11h4M8 13h4M8 15h4" stroke="#4586c8" /><path d="M0 15l4 2v2H0zM18 15l-4 2v2h5z" fill="#cb3b36" />
        </symbol>
        <symbol id="i-folder" viewBox="0 0 20 20"><path d="M1 4h9l2-3h6v17H1z" fill="url(#folderG)" stroke="#cfaa5c" stroke-width=".8" /><path d="M12 2h6v2h-7z" fill="#fdf4d8" stroke="#c7ab6c" stroke-width=".5" /><path d="M13 3h3" stroke="#7795b5" /></symbol>
        <symbol id="i-vdir" viewBox="0 0 20 20"><use href="#i-folder" x="1" /><path d="M.5 9.500h9v10h-9z" fill="#dfe5f3" stroke="#a8b1c9" /><path d="M3 18c0-3 1-4 3-4v-2l2 3-2 2v-1c-1 0-2 0-3 2z" fill="#353ca8" /></symbol>
        <symbol id="i-app" viewBox="0 0 20 20">
          <use href="#globe" x="4" y="0" width="15" height="15" /><path d="M1 7h8v11H1z" fill="#f4f4f4" stroke="#999" /><path d="M4 9h6l3 2v9H4z" fill="#fff" stroke="#888" /><path d="M6 13h5M6 15h5M6 17h5" stroke="#3978bd" />
        </symbol>
        <symbol id="i-browse" viewBox="0 0 20 20"><path d="M3 1h11l4 3v14l-4 1H3z" fill="#f1cc6e" stroke="#c79d3d" stroke-width=".7" /><path d="M14 2l4 2v14l-4 1z" fill="#e4b54a" /><path d="M7 13l-6 6" stroke="#7c7c7c" stroke-width="2.500" /><circle cx="9" cy="10" r="4.500" fill="#d4ecfb" stroke="#8b98a5" stroke-width="1.300" /></symbol>
        <symbol id="i-refresh" viewBox="0 0 20 20"><rect x=".5" y=".5" width="19" height="19" rx="1.500" fill="url(#greenG)" stroke="#9cb59c" /><path d="M8 4C5 4 5 6 5 8H2l4 5 4-5H7.500c0-1 0-2 2-2zM11 16c4 0 4-2 4-5h3l-4-5-4 5h2.500c0 2 0 3-2.500 3z" fill="#fff" /></symbol>
        <symbol id="i-connect" viewBox="0 0 20 20"><use href="#globe" width="17" height="17" /><path d="M9 11l4-1 2 4 4 5" fill="none" stroke="#8ba5b8" stroke-width="2.500" /></symbol>
        <symbol id="i-config" viewBox="0 0 20 20" preserveAspectRatio="none"><rect x=".7" y=".7" width="18.600" height="18.600" rx="1.500" fill="#e7eaec" stroke="#878c91" /><path d="M3 4h6v2h8v10H3z" fill="#fff" stroke="#9ba2a9" stroke-width=".8" /><path d="M5 9h10M7 12h7M7 14h7" stroke="#a0a7ad" /><path d="M5 12h1M5 14h1" stroke="#2aa6e0" /><path d="M6 17.500h5" stroke="#41b7e8" stroke-width="1.300" /><path d="M12 17.500h5M1 2h18" stroke="#aeb4ba" /></symbol>
        <symbol id="i-help" viewBox="0 0 20 20"><circle cx="10" cy="10" r="9.200" fill="#2a50ba" stroke="#8e8f93" stroke-width="1.600" /><path d="M3 9c1-7 13-7 14 0-4 2-10 2-14 0z" fill="#7f9ee6" opacity=".6" /></symbol>
      </svg>
    </div>
  </body>
</html>
```
FILE: styles.css
```css
* {
  box-sizing: border-box;
}

body {
  margin: 0;
  font-family: "Open Sans", "Noto Sans CJK SC", sans-serif;
  font-size: 15px;
  line-height: 25px;
  color: #1a1a1a;
  overflow: hidden;
}

h1,
h2,
h3,
p,
ul {
  margin: 0;
  padding: 0;
  font-size: inherit;
}

ul {
  list-style: none;
}

a {
  color: inherit;
  text-decoration: none;
}

button,
input,
select {
  font: inherit;
  color: inherit;
  background: none;
  border: none;
  padding: 0;
}

svg {
  display: block;
  flex: none;
}

.icon {
  width: 20px;
  height: 20px;
}

.sprite {
  width: 0;
  height: 0;
}

.code {
  font: 11px "Noto Sans", sans-serif;
}

.ab {
  font: bold 15px "Liberation Serif", serif;
  fill: #b22a2a;
}

.q {
  font: bold 14px "Open Sans", sans-serif;
  fill: #fff;
}

.window {
  position: relative;
  display: flex;
  flex-direction: column;
  height: 100vh;
  border: 1px solid #1b7fd6;
  overflow: hidden;
}

.titlebar {
  flex: none;
  display: flex;
  align-items: center;
  height: 37px;
  padding: 0 2px 0 10px;
  background: #fff;
  color: #000;
}

.titlebar-text {
  flex: 1;
  padding-left: 5px;
}

.win-button {
  display: flex;
  align-items: center;
  justify-content: center;
  width: 58px;
  height: 36px;
}

.viewport {
  flex: 1;
  min-height: 0;
  display: grid;
  grid-template-columns: minmax(0, 1fr) 21px;
  grid-template-rows: minmax(0, 1fr) 21px;
  background: #f0f0f0;
}

.remote {
  display: flex;
  flex-direction: column;
  overflow: hidden;
  background: #e3e3e3;
}

/* IIS 标题栏 */
.iis-title {
  flex: none;
  display: flex;
  height: 30px;
  padding-left: 2px;
  background: #67caeb;
  border-bottom: 1px solid #93a9bf;
}

.iis-title .icon {
  margin-top: 4px;
}

.iis-name {
  flex: 1;
  padding-left: 104px;
  text-align: center;
  font-size: 18px;
  font-weight: normal;
  line-height: 28px;
  color: #000;
}

.iis-button {
  display: flex;
  align-items: center;
  justify-content: center;
  width: 33px;
  height: 25px;
  border: solid #333;
  border-width: 0 0 1px 1px;
}

.iis-button.close {
  width: 21px;
  background: #c4544f;
}

/* 地址栏 */
.navbar {
  flex: none;
  display: flex;
  align-items: center;
  height: 40px;
  background: #a5bddb;
}

.nav-arrows {
  width: 80px;
  height: 36px;
  margin: 0 13px 0 2px;
}

.address {
  flex: 1;
  display: flex;
  align-items: center;
  gap: 12px;
  height: 31px;
  margin-top: -4px;
  padding: 0 0 2px 8px;
  background: #e6edf6;
  border: 1px solid #6b747e;
  font-family: "Noto Sans", "Noto Sans CJK SC", sans-serif;
  color: #333;
}

.crumb-arrow {
  width: 5px;
  border: solid transparent;
  border-width: 4px 0 4px 5px;
  border-left-color: #000;
}

.address a + .crumb-arrow {
  margin: 0 4px 0 6px;
}

.nav-tools {
  display: flex;
  align-items: center;
  gap: 8px;
  width: 105px;
  padding-left: 8px;
  margin-top: -8px;
  overflow: hidden;
}

.nav-sep {
  flex: none;
  width: 2px;
  height: 17px;
  background: #e4eaf2;
}

.menubar {
  flex: none;
  display: flex;
  gap: 27px;
  height: 32px;
  padding: 0 0 2px 18px;
  background: linear-gradient(#fdfdfd, #efefef);
}

.panes {
  flex: 1;
  min-height: 0;
  display: flex;
  gap: 8px;
  padding-left: 1px;
}

.pane-title {
  height: 33px;
  padding-left: 9px;
  background: #a0a0a0;
  line-height: 33px;
  color: #000;
}

/* 连接 */
.connections {
  flex: none;
  width: 409px;
  background: #fff;
  border: solid #a0a0a0;
  border-width: 0 1px;
  overflow: hidden;
}

.conn-tools,
.conn-tools button {
  display: flex;
  align-items: center;
}

.conn-tools {
  gap: 7px;
  height: 31px;
  padding-left: 2px;
  background: linear-gradient(#fff, #efefef);
  border-bottom: 1px solid #aaa;
}

.conn-tools button:first-child {
  gap: 4px;
}

.tool-sep {
  width: 2px;
  height: 19px;
  background: #a0a0a0;
}

.caret {
  flex: none;
  width: 6px;
  border: solid transparent;
  border-width: 4px 3px 0;
  border-top-color: #000;
}

.caret.gray {
  border-top-color: #999;
}

.tree {
  padding-left: 8px;
  font-family: "Noto Sans", "Noto Sans CJK SC", sans-serif;
  white-space: nowrap;
}

.tree ul {
  padding-left: 24px;
}

.tree li:not(:last-child),
.tree ul .node {
  background: repeating-linear-gradient(#8c8c8c 0 1px, transparent 1px 3px) 6px 0 / 1px 100% no-repeat;
}

.tree > li:first-child {
  background-position-y: 12px;
}

.tree li:last-child > .node {
  background-size: 1px 12px;
}

.node {
  display: flex;
  align-items: center;
  height: 25px;
}

.node > .icon {
  margin-right: 7px;
}

/* 展开箭头后的短虚线 */
.node::before {
  content: "";
  order: 1;
  width: 5px;
  height: 1px;
  background: repeating-linear-gradient(90deg, #8c8c8c 0 1px, transparent 1px 3px);
}

.node > * {
  flex: none;
  order: 2;
}

.node > .expander {
  order: 0;
  width: 14px;
  height: 11px;
  background: #fff;
}

.expander::before {
  content: "";
  display: block;
  width: 8px;
  height: 11px;
  margin-left: 4px;
  background: #666;
  clip-path: polygon(0 0, 100% 50%, 0 100%, 0 0, 1px 2px, 1px 9px, 6px 50%, 1px 2px);
}

.expander.open::before {
  width: 9px;
  height: 9px;
  margin: 1px 0 0 2px;
  background: #555;
  clip-path: polygon(100% 0, 100% 100%, 0 100%);
}

.node.leaf > .expander {
  background: none;
}

.leaf > .expander::before {
  width: 8px;
  height: 1px;
  margin: 5px 0 0 6px;
  background: repeating-linear-gradient(90deg, #8c8c8c 0 1px, transparent 1px 3px);
  clip-path: none;
}

.selected {
  display: flex;
  align-items: center;
  gap: 7px;
  height: 25px;
  margin-left: -3px;
  padding: 0 4px 0 2px;
  background: #dbe9fb;
  border: 1px solid #7fa9dc;
}

/* 功能视图 */
.features {
  flex: 1;
  min-width: 0;
  display: flex;
  flex-direction: column;
  margin-bottom: 4px;
  padding: 0 15px 16px;
  background: #fff;
  border: 1px solid #a0a0a0;
  border-right-width: 2px;
}

.page-head {
  display: flex;
  align-items: center;
  gap: 22px;
  height: 66px;
  padding-bottom: 2px;
}

.page-globe {
  width: 40px;
  height: 40px;
  margin-top: 6px;
}

.page-head h2 {
  font-size: 24px;
  font-weight: normal;
  color: #000;
}

.feature-box {
  flex: 1;
  border: 1px solid #ececec;
}

.filter-bar {
  display: flex;
  align-items: center;
  height: 34px;
  padding-left: 8px;
  background: linear-gradient(#fdfdfd, #efefef);
  border-bottom: 1px solid #999;
  color: #000;
}

.filter-bar button {
  display: flex;
  align-items: center;
}

.filter-bar button .icon {
  margin: 0 3px;
}

.filter-bar .disabled {
  margin-right: 15px;
  color: #8b8b8b;
}

.filter-bar .tool-sep {
  margin: 0 6px 0 12px;
}

.combo {
  display: flex;
  align-items: center;
  width: 154px;
  height: 31px;
  margin-left: 6px;
  padding: 0 6px;
  background: #fff;
}

.combo input,
.combo select {
  flex: 1;
  min-width: 0;
  appearance: none;
}

.combo.group {
  width: 146px;
}

.filter-bar .caret.gray {
  margin-right: 4px;
}

section {
  margin-bottom: 5px;
}

.group-head {
  display: flex;
  align-items: center;
  height: 27px;
  padding: 0 10px 0 14px;
}

.group-head h3 {
  font-weight: normal;
  line-height: 21px;
  color: #1f43a8;
}

.rule {
  flex: 1;
  height: 2px;
  margin: 0 15px 0 6px;
  background: #e4edf8;
}

.chevron {
  width: 10px;
  height: 8px;
}

.items {
  display: grid;
  grid-template-columns: repeat(auto-fill, 94px);
  margin-left: -2px;
}

.item {
  display: flex;
  flex-direction: column;
  align-items: center;
  gap: 3px;
  height: 94px;
  padding-top: 4px;
  line-height: 21px;
  text-align: center;
  white-space: nowrap;
  color: #000;
}

.item svg {
  width: 40px;
  height: 40px;
}

/* 操作 */
.actions {
  flex: none;
  width: 212px;
  background: linear-gradient(90deg, #fff, #e2e2e2);
  border-left: 1px solid #a0a0a0;
}

.action-list {
  padding-top: 6px;
}

.action-list li {
  display: flex;
  align-items: center;
  height: 25px;
  padding-left: 36px;
}

.action-list .icon {
  margin: 0 10px 0 -30px;
}

.action-list a {
  color: #0d6cd6;
}

.action-list h3 {
  color: #000;
}

.off {
  color: #a2a2a2;
}

.action-list .sep {
  height: 1px;
  margin: 2px 0 3px 4px;
  background: linear-gradient(90deg, #ddd, #999 30%, #999);
}

.action-list .band {
  height: 31px;
  padding-left: 9px;
  background: linear-gradient(90deg, #f1f1f1, #fff);
}

/* 滚动条 */
.scroll-y {
  display: flex;
  flex-direction: column;
  border-left: 1px solid #fff;
}

.scroll-x {
  display: flex;
  border-top: 1px solid #fff;
}

.scroll-x button,
.scroll-y button {
  display: flex;
  align-items: center;
  justify-content: center;
  width: 20px;
  height: 20px;
}

.thumb {
  flex: 834;
  background: #cdcdcd;
}

.track {
  flex: 96;
}

.scroll-x .thumb {
  flex: 1802;
  background: #c8c8c8;
}

.scroll-x .track {
  flex: 37;
}

.grip {
  width: 20px;
  height: 20px;
}

/* 右键菜单 */
.context-menu {
  position: absolute;
  left: 114px;
  top: 662px;
  width: 202px;
  padding: 2px 1px;
  background: linear-gradient(90deg, #fafafa, #ececec 30px, #fcfcfc 30px);
  border: 1px solid #646464;
}

.context-menu button {
  display: flex;
  align-items: center;
  width: 100%;
  height: 27px;
  padding-left: 43px;
  line-height: 21px;
}

.context-menu .icon {
  margin: 0 19px 0 -39px;
}

.context-menu .crumb-arrow {
  margin-left: auto;
  margin-right: 13px;
}

.context-menu hr {
  height: 1px;
  margin: 3px 0 4px 40px;
  border: none;
  background: #a0a0a0;
}

.pointer {
  position: absolute;
  left: 21px;
  top: 761px;
  width: 152px;
  height: 18px;
}

/* 网速悬浮球 */
.meter {
  position: absolute;
  right: 20px;
  top: 779px;
  display: flex;
  align-items: center;
}

.speeds {
  width: 100px;
  margin-right: -26px;
  padding: 0 31px 0 14px;
  background: #30343f;
  border-radius: 26px 0 0 26px;
  box-shadow: 0 0 6px rgba(60, 50, 70, 0.6);
  color: #9a9ca4;
  font-size: 12px;
}

.speeds p {
  display: flex;
  align-items: center;
  height: 26px;
}

.speeds p + p {
  border-top: 1px solid #3c404a;
}

.speeds b {
  margin-left: auto;
  font-size: 14px;
  font-weight: 600;
  color: #fff;
}

.ball {
  display: grid;
  place-items: center;
  width: 74px;
  height: 74px;
  border-radius: 50%;
  background: linear-gradient(#5f6474, #494d5a);
  box-shadow: 0 0 6px rgba(60, 50, 70, 0.7);
}

.ring,
.percent {
  grid-area: 1 / 1;
}

.ring {
  width: 74px;
  height: 74px;
}

.percent {
  font-size: 31px;
  font-weight: 300;
  color: #f2f2f4;
}

.percent small {
  font-size: 12px;
  font-weight: 400;
}
```
